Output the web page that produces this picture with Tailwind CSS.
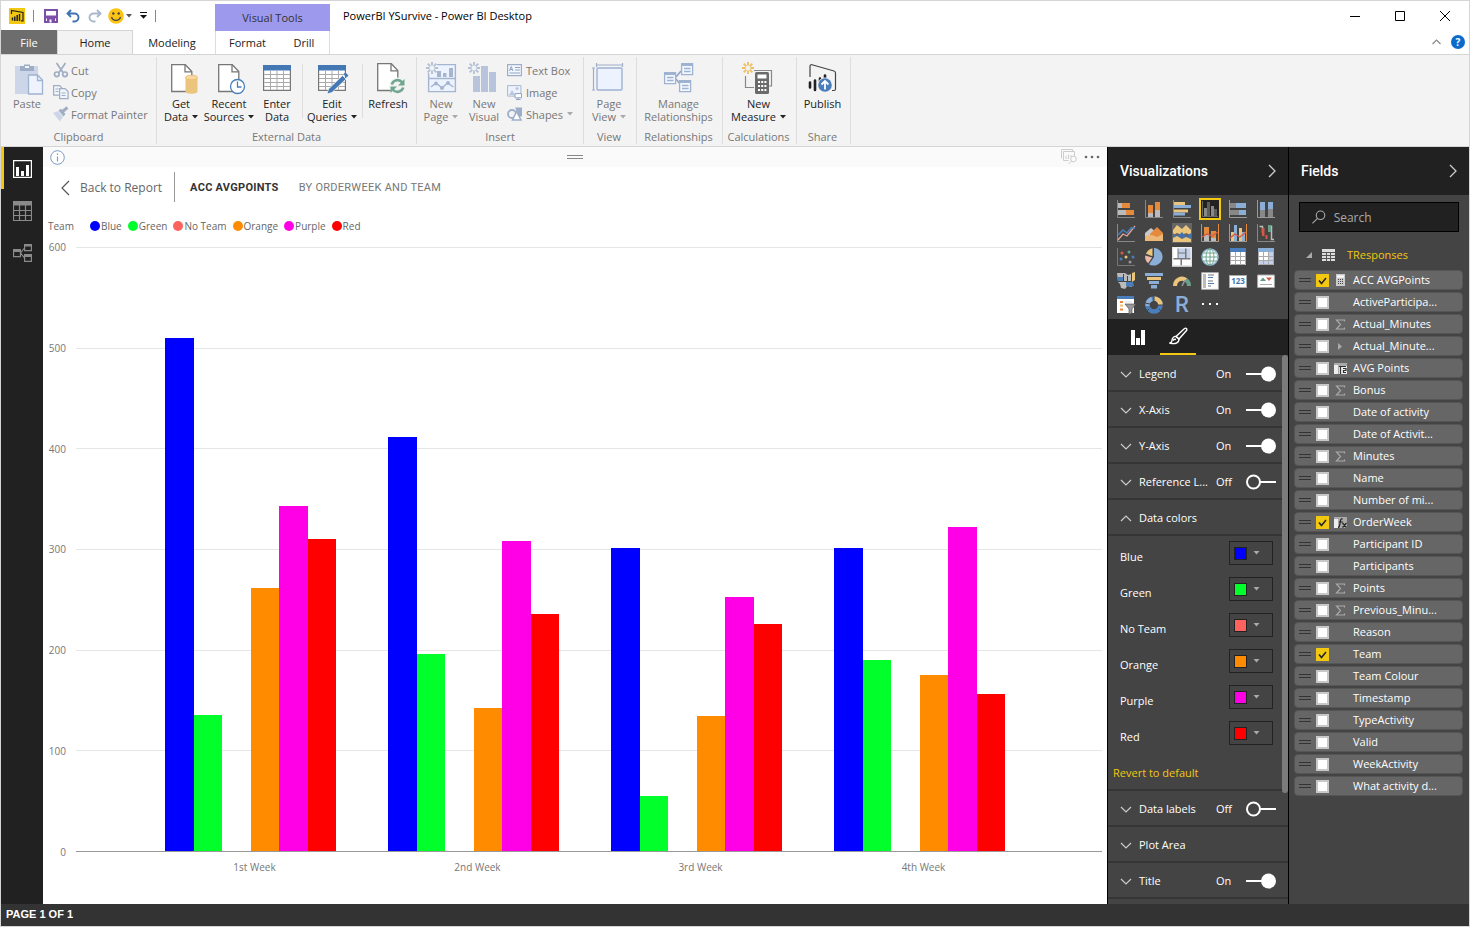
<!DOCTYPE html>
<html lang="en">
<head>
    <meta charset="UTF-8">
    <meta name="viewport" content="width=device-width, initial-scale=1.0">
    <title>PowerBI YSurvive - Power BI Desktop</title>
    <script src="https://cdn.jsdelivr.net/npm/@tailwindcss/browser@4"></script>
</head>
<body class="font-['Open_Sans','Noto_Sans',sans-serif] text-[11px] text-[#222]">

<!-- Shared icon shapes -->
<svg class="hidden">
    <symbol id="caret" viewBox="0 0 6 4"><path d="M0 0h6L3 3.6z" fill="currentColor"/></symbol>
    <symbol id="page" viewBox="0 0 34 34"><path d="M.7.7h13.6l6.5 6.8v20H.7z" fill="#fff" stroke="#777" stroke-width="1.3"/><path d="M14 1v6.8h6.6" fill="none" stroke="#777" stroke-width="1.3"/></symbol>
    <symbol id="burst" viewBox="0 0 12 12"><path d="M6 0v3.6M6 8.4V12M0 6h3.6M8.4 6H12M1.7 1.7l2.6 2.6M7.7 7.7l2.6 2.6M10.3 1.7L7.7 4.3M4.3 7.7l-2.6 2.6" stroke="currentColor" stroke-width="1.9" fill="none"/></symbol>
    <symbol id="grid" viewBox="0 0 28 26"><path d="M.6.6h26.8v24.8H.6z" fill="#fff" stroke="#777" stroke-width="1.2"/><path d="M1 9.5h26M1 13.5h26M1 17.5h26M1 21.5h26M7.5 6v19M14 6v19M20.5 6v19" stroke="#aaa"/><path d="M0 0h28v5.5H0z" fill="#4378b4"/></symbol>
    <symbol id="chev-right" viewBox="0 0 8 14"><path d="M1 1l6 6-6 6" fill="none" stroke="currentColor" stroke-width="1.3"/></symbol>
</svg>

<div class="flex h-screen flex-col overflow-hidden border border-[#d5d5d5] bg-white">

    <!-- Title bar and tabs -->
    <header class="flex h-[53px] shrink-0">
        <div class="flex w-[214px] shrink-0 flex-col">
            <div class="flex h-[30px] items-center pl-2">
                <svg width="16" height="16" viewBox="0 0 16 16"><path d="M0 0h16v16H0z" fill="#f2c811"/><path d="M2.5 6V2.5l11.500 2v8.300H12" fill="none" stroke="#222" stroke-width="1.2"/><path d="M3.500 9.500v3M5.800 8.500v4.500M8.200 7v6M10.500 6v7" stroke="#222" stroke-width="1.500"/></svg>
                <span class="ml-2 h-3 w-px bg-[#888]"></span>
                <button aria-label="Save" class="ml-2.5"><svg width="14" height="14" viewBox="0 0 14 14"><path d="M1 1h12v12H1z" fill="#fff" stroke="#7e4fa8" stroke-width="2"/><path d="M1 6.500h12v3H1z" fill="#7e4fa8"/><path d="M3 8h8v6H3z" fill="#7e4fa8"/><path d="M5.500 10.500h2v3h-2z" fill="#fff"/></svg></button>
                <button aria-label="Undo" class="ml-2"><svg width="14" height="14" viewBox="0 0 14 14"><path d="M5 1L1.500 4.500 5 8M2 4.500h6.500a4 4 0 010 8H6.500" fill="none" stroke="#3f73b5" stroke-width="1.900"/></svg></button>
                <button aria-label="Redo" class="ml-2"><svg width="14" height="14" viewBox="0 0 14 14"><path d="M9 1l3.500 3.500L9 8M12 4.500H5.500a4 4 0 000 8h2" fill="none" stroke="#a9b8cd" stroke-width="1.900"/></svg></button>
                <button aria-label="Send feedback" class="ml-1.5 flex items-center gap-0.5"><svg width="16" height="16" viewBox="0 0 16 16"><circle cx="8" cy="8" r="7.800" fill="#fcc414"/><circle cx="5.300" cy="5.500" r="1.200" fill="#444"/><circle cx="10.700" cy="5.500" r="1.200" fill="#444"/><path d="M3.500 9a4.700 4.700 0 009 0" fill="none" stroke="#444" stroke-width="1.300"/></svg><svg class="h-[4px] w-[6px] text-[#555]"><use href="#caret"/></svg></button>
                <button aria-label="Customize quick access" class="ml-2"><svg width="7" height="7" viewBox="0 0 7 7"><path d="M0 3h7L3.500 6.800z" fill="#111"/><path d="M0 .5h7" stroke="#111"/></svg></button>
                <span class="ml-2 h-3 w-px bg-[#888]"></span>
            </div>
            <nav class="flex h-[24px] shrink-0 text-center">
                <button class="w-[56px] bg-[#6d6d6d] pt-0.5 text-white">File</button>
                <button class="w-[76px] border border-b-0 border-[#d5d5d5] bg-[#f3f3f3] pt-px">Home</button>
                <button class="flex-1 pt-0.5 pr-1">Modeling</button>
            </nav>
        </div>
        <div class="flex w-[115px] shrink-0 flex-col pt-[3px]">
            <div class="flex h-[27px] items-center justify-center bg-[#9d9aee] pt-0.5 text-[#333]">Visual Tools</div>
            <nav class="flex flex-1 border-x border-[#ddd] pt-0.5">
                <button class="w-[63px]">Format</button>
                <button class="flex-1">Drill</button>
            </nav>
        </div>
        <h1 class="ml-[13px] flex-1 text-[11px] leading-[30px] text-black">PowerBI YSurvive - Power BI Desktop</h1>
        <div class="flex flex-col">
            <div class="flex h-[29px] items-center gap-[35px] pr-[18px]">
                <button aria-label="Minimize"><svg width="10" height="10"><path d="M0 5.500h10" stroke="#000"/></svg></button>
                <button aria-label="Maximize"><svg width="10" height="10"><path d="M.5.5h9v9h-9z" fill="none" stroke="#000"/></svg></button>
                <button aria-label="Close"><svg width="11" height="10"><path d="M0 0l10 10M10 0L0 10" stroke="#000"/></svg></button>
            </div>
            <div class="flex flex-1 items-center justify-end gap-2.5 pr-1">
                <button aria-label="Collapse ribbon"><svg width="9" height="6" viewBox="0 0 9 6"><path d="M.5 5l4-4 4 4" fill="none" stroke="#888" stroke-width="1.200"/></svg></button>
                <button aria-label="Help" class="flex size-[14px] items-center justify-center rounded-full bg-[#0b6bcb] text-[10px] leading-none font-bold text-white">?</button>
            </div>
        </div>
    </header>

    <!-- Ribbon -->
    <div class="flex h-[93px] shrink-0 border-y border-[#d5d5d5] bg-[#f3f3f3] py-0.5 leading-[13px]">
        <section class="flex w-[156px] flex-col border-r border-[#ddd] text-[#777]">
            <div class="flex flex-1">
                <button class="flex w-[52px] flex-col items-center pt-[5px]">
                    <svg class="mb-px" width="34" height="34" viewBox="0 0 34 34"><path d="M5 4h23v28H5z" fill="#cdd6e8"/><path d="M10 9V4h4V2.500h6V4h4v5z" fill="#9eadc6"/><path d="M15 4h4v2h-4z" fill="#f3f3f3"/><path d="M18.500 13h9l5 5v14h-14z" fill="#eef3fd" stroke="#9eb2d2" stroke-width="1.300"/><path d="M27.500 13v5.500h5" fill="none" stroke="#9eb2d2" stroke-width="1.300"/></svg>
                    <span>Paste</span>
                </button>
                <div class="flex flex-col pt-0.5">
                    <button class="flex h-[22px] items-center gap-0.5"><svg width="16" height="16" viewBox="0 0 16 16" fill="none" stroke="#a0adc2" stroke-width="1.700"><path d="M3.500 1l6.500 9.500M12.500 1L6 10.500"/><circle cx="3.800" cy="12.300" r="2.300"/><circle cx="12" cy="12.300" r="2.300"/></svg>Cut</button>
                    <button class="flex h-[22px] items-center gap-0.5"><svg width="16" height="16" viewBox="0 0 16 16" fill="#f0f4fc" stroke="#a0adc2" stroke-width="1.200"><path d="M.6 1.600h6l2 2v7.500h-8z"/><path d="M6.600 4.600h5.500l3 3v7h-8.500z"/><path d="M2.500 5h3M2.500 7.500h3M8.500 9h4M8.500 11.500h4"/></svg>Copy</button>
                    <button class="flex h-[22px] items-center gap-0.5"><svg width="16" height="16" viewBox="0 0 16 16"><path d="M0 7l5-2 5 6-3 4.500z" fill="#cdd6e8"/><path d="M5.500 4.500l2.500-1.800L12.500 8 10.500 10.500z" fill="#a0adc2"/><path d="M9.500 5.500l5-4" stroke="#a0adc2" stroke-width="3"/></svg>Format Painter</button>
                </div>
            </div>
            <span class="h-[14px] text-center">Clipboard</span>
        </section>
        <section class="flex w-[260px] flex-col border-r border-[#ddd]">
            <div class="flex flex-1 pt-[5px]">
                <button class="flex w-[48px] flex-col items-center">
                    <svg class="mb-px" width="34" height="34" viewBox="0 0 34 34"><use href="#page" x="7" y="2" width="34" height="34"/><path d="M21.500 15.500v14c0 3 12 3 12 0v-14z" fill="#ecc57c"/><ellipse cx="27.500" cy="15.500" rx="6" ry="2.300" fill="#f5d9a0" stroke="#e6b968" stroke-width=".8"/></svg>
                    <span>Get</span>
                    <span class="flex items-center gap-1">Data<svg class="h-[4px] w-[6px]"><use href="#caret"/></svg></span>
                </button>
                <button class="flex w-[48px] flex-col items-center">
                    <svg class="mb-px" width="34" height="34" viewBox="0 0 34 34"><use href="#page" x="6" y="2" width="34" height="34"/><circle cx="25.500" cy="24.500" r="7" fill="#fff" stroke="#4a7ebb" stroke-width="1.300"/><path d="M25.500 19.500v5.500h4" fill="none" stroke="#4a7ebb" stroke-width="1.300"/></svg>
                    <span>Recent</span>
                    <span class="flex items-center gap-1">Sources<svg class="h-[4px] w-[6px]"><use href="#caret"/></svg></span>
                </button>
                <button class="flex w-[48px] flex-col items-center">
                    <svg class="mb-px" width="34" height="34" viewBox="0 0 34 34"><use href="#grid" x="3" y="3" width="28" height="26"/></svg>
                    <span>Enter</span><span>Data</span>
                </button>
                <span class="mt-0.5 mb-3 ml-px w-px bg-[#ddd]"></span>
                <button class="flex w-[58px] flex-col items-center">
                    <svg class="mb-px" width="34" height="34" viewBox="0 0 34 34"><use href="#grid" x="3" y="3" width="28" height="26"/><path d="M12 32l1.500-5L27.500 13.500l3.500 3.500L17 30.500z" fill="#4378b4" stroke="#f3f3f3" stroke-width=".8"/><path d="M28.500 12l2-1.500 3 3-2 2z" fill="#4378b4"/></svg>
                    <span>Edit</span>
                    <span class="flex items-center gap-1">Queries<svg class="h-[4px] w-[6px]"><use href="#caret"/></svg></span>
                </button>
                <span class="mt-0.5 mb-3 ml-px w-px bg-[#ddd]"></span>
                <button class="flex w-[50px] flex-col items-center">
                    <svg class="mb-px" width="34" height="34" viewBox="0 0 34 34"><use href="#page" x="6" y="1" width="34" height="34"/><circle cx="26.500" cy="24" r="8.500" fill="#f3f3f3"/><path d="M20.800 22.500a6 6 0 0110.500-2M32.200 25.500a6 6 0 01-10.500 2" fill="none" stroke="#6fa68f" stroke-width="2.600"/><path d="M33.500 17v6.500H27zM19.500 31v-6.500H26z" fill="#6fa68f"/></svg>
                    <span>Refresh</span>
                </button>
            </div>
            <span class="h-[14px] text-center text-[#777]">External Data</span>
        </section>
        <section class="flex w-[167px] flex-col border-r border-[#ddd] text-[#777]">
            <div class="flex flex-1">
                <button class="flex w-[48px] flex-col items-center pt-[5px]">
                    <svg class="mb-px" width="34" height="34" viewBox="0 0 34 34"><path d="M4.600 2.600h26.800v27H4.600zM4.600 16.500h26.800" fill="#ecf3fe" stroke="#a5b5d0" stroke-width="1.400"/><path d="M13 9h4v6h-4zM19 11h3.500v4H19zM25 6h4v9h-4z" fill="#a5b5d0"/><path d="M7 25l5-4 6 5 5.500-5 6 4" fill="none" stroke="#a5b5d0" stroke-width="1.500"/><circle cx="12" cy="21.500" r="2" fill="#a5b5d0"/><circle cx="18" cy="26" r="2" fill="#a5b5d0"/><circle cx="24" cy="21" r="2" fill="#a5b5d0"/><circle cx="8" cy="6" r="6" fill="#f3f3f3"/><use href="#burst" x="2" y="0" width="12" height="12" color="#b4c0d6"/></svg>
                    <span>New</span>
                    <span class="flex items-center gap-1">Page<svg class="h-[4px] w-[6px] text-[#aaa]"><use href="#caret"/></svg></span>
                </button>
                <button class="flex w-[38px] flex-col items-center pt-[5px]">
                    <svg class="mb-px" width="34" height="34" viewBox="0 0 34 34"><path d="M6 14h7v16H6zM14 4h7v26h-7zM22 10h7v20h-7z" fill="#b7c4db"/><circle cx="7" cy="5.500" r="6" fill="#f3f3f3"/><use href="#burst" x="1" y="0" width="12" height="12" color="#b4c0d6"/></svg>
                    <span>New</span><span>Visual</span>
                </button>
                <div class="ml-1 flex flex-col pt-0.5">
                    <button class="flex h-[22px] items-center gap-1"><svg width="15" height="14" viewBox="0 0 15 14"><path d="M.6 1.600h13.800v11H.6z" fill="#f3f7fe" stroke="#9eaec9" stroke-width="1.200"/><path d="M2.500 8l1.700-4.500L6 8M3 6.500h2.400M8 4.500h5M8 7h5M2.500 10h10.500" fill="none" stroke="#8fa3c5"/></svg>Text Box</button>
                    <button class="flex h-[22px] items-center gap-1"><svg width="15" height="16" viewBox="0 0 15 16"><path d="M.6 1.600h13.300v10.500H.6z" fill="#ecf3fe" stroke="#a9b7ce"/><path d="M2 11l3-5 3 5z" fill="#b9c6dc"/><circle cx="10" cy="4.500" r="1.500" fill="#b9c6dc"/><path d="M8 9.600h6.500v4.200H8zM11.200 14v1.500M9 15.500h4.500" fill="#fff" stroke="#8fa3c5"/></svg>Image</button>
                    <button class="flex h-[22px] items-center gap-1"><svg width="15" height="14" viewBox="0 0 15 14"><circle cx="5" cy="7" r="4" fill="none" stroke="#9eaec9" stroke-width="1.800"/><path d="M8 .500h7v9H12z" fill="#9eaec9"/><path d="M9.500 4.500l4.500 8.500H5.500z" fill="#fff" stroke="#9eaec9" stroke-width="1.500"/></svg>Shapes<svg class="h-[4px] w-[6px] text-[#aaa]"><use href="#caret"/></svg></button>
                </div>
            </div>
            <span class="h-[14px] text-center">Insert</span>
        </section>
        <section class="flex w-[53px] flex-col border-r border-[#ddd] text-[#777]">
            <button class="flex flex-1 flex-col items-center pt-[5px] pr-0.5">
                <svg class="mb-px" width="34" height="34" viewBox="0 0 34 34"><rect x="5" y="6" width="25" height="22" rx="1" fill="#ecf3fe" stroke="#9eb2d2" stroke-width="1.400"/><path d="M4.500 3h26M4.500 1v4M30.500 1v4M1.500 6v22M0 6h3M0 28h3" stroke="#9eaec9" stroke-width="1.200"/></svg>
                <span>Page</span>
                <span class="flex items-center gap-1">View<svg class="h-[4px] w-[6px] text-[#aaa]"><use href="#caret"/></svg></span>
            </button>
            <span class="h-[14px] pr-0.5 text-center">View</span>
        </section>
        <section class="flex w-[86px] flex-col border-r border-[#ddd] text-[#777]">
            <button class="flex flex-1 flex-col items-center pt-[5px] pr-0.5">
                <svg class="mb-px" width="34" height="34" viewBox="0 0 34 34"><path d="M14 15l5-6M14 17l5 6" stroke="#8fa3c5" stroke-width="1.600"/><g fill="#f3f7fe" stroke="#9eb2d2" stroke-width="1.300"><path d="M2.600 10.600h11v11h-11zM19.600 1.600h11v11h-11zM17.600 18.600h11v11h-11z"/><path d="M5 15.500h6.500M5 18.500h6.500M22 6.500h6.500M22 9.500h6.500M20 23.500h6.500M20 26.500h6.500"/></g><path d="M2 10h12v3H2zM19 1h12v3H19zM17 18h12v3H17z" fill="#9eb2d2"/></svg>
                <span>Manage</span><span>Relationships</span>
            </button>
            <span class="h-[14px] pr-0.5 text-center">Relationships</span>
        </section>
        <section class="flex w-[74px] flex-col border-r border-[#ddd]">
            <button class="flex flex-1 flex-col items-center pt-[5px] pr-0.5">
                <svg class="mb-px" width="34" height="34" viewBox="0 0 34 34"><path d="M12 8.500h17.500V24H27M3.500 14v11.500H12" fill="none" stroke="#888" stroke-width="1.200"/><rect x="13" y="10" width="14" height="22" rx="1.500" fill="#6b6b6b"/><path d="M15.500 12.500h9v4h-9z" fill="#fff"/><path d="M16 19h2v2h-2zM19.200 19h2v2h-2zM22.400 19h2v2h-2zM16 23h2v2h-2zM19.200 23h2v2h-2zM22.400 23h2v2h-2zM16 27h2v2h-2zM19.200 27h2v2h-2zM22.400 27h2v2h-2z" fill="#fff"/><use href="#burst" x="0" y="0" width="12" height="12" color="#eebf63"/></svg>
                <span>New</span>
                <span class="flex items-center gap-1">Measure<svg class="h-[4px] w-[6px]"><use href="#caret"/></svg></span>
            </button>
            <span class="h-[14px] pr-0.5 text-center text-[#777]">Calculations</span>
        </section>
        <section class="flex w-[54px] flex-col border-r border-[#ddd]">
            <button class="flex flex-1 flex-col items-center pt-[5px] pr-0.5">
                <svg class="mb-px" width="34" height="34" viewBox="0 0 34 34"><path d="M4 15V4c0-1 1-1.500 2-1.200L28 9c1.200.3 1.500 1 1.500 2v16c0 1-.5 1.500-1.500 1.500h-2" fill="none" stroke="#444" stroke-width="1.200"/><path d="M4 20.500v5M9 18.500V28M14 16.500v3M19 13.500v3" stroke="#222" stroke-width="2.600" stroke-linecap="round"/><circle cx="19" cy="23" r="7.500" fill="#f3f3f3"/><circle cx="19" cy="23" r="6.800" fill="#4a7ebb"/><path d="M19 27.500v-8M15.500 22.500l3.500-3.500 3.500 3.500" fill="none" stroke="#fff" stroke-width="1.800"/></svg>
                <span>Publish</span>
            </button>
            <span class="h-[14px] pr-0.5 text-center text-[#777]">Share</span>
        </section>
    </div>

    <div class="flex min-h-0 flex-1">
        <!-- View switcher -->
        <nav class="flex w-[42px] shrink-0 flex-col bg-[#212121]">
            <button aria-label="Report view" class="flex h-[42px] items-center border-l-3 border-[#f2c811] pt-0.5 pl-[9px]"><svg width="19" height="18" viewBox="0 0 19 18"><path d="M.6.6h17.800v16.800H.6z" fill="none" stroke="#fff" stroke-width="1.200"/><path d="M3 7h3v9H3zM8 11h3v5H8zM13 5h3v11h-3z" fill="#fff"/></svg></button>
            <button aria-label="Data view" class="flex h-[42px] items-center pt-0.5 pl-3"><svg width="19" height="20" viewBox="0 0 19 20"><path d="M.5.500h18v19H.5zM0 9.500h19M0 14.500h19M6.500 4v16M12.500 4v16" fill="none" stroke="#8a8a8a" stroke-width="1.200"/><path d="M0 0h19v4.500H0z" fill="#8a8a8a"/></svg></button>
            <button aria-label="Relationship view" class="flex h-[42px] items-center pt-0.5 pl-3"><svg width="19" height="18" viewBox="0 0 19 18"><path d="M.6 5.600h6.800v7H.6zM11.600.6h6.800v6h-6.800zM11.600 10.600h6.800v6.800h-6.800zM7.500 9l4-5M7.500 9l4 5" fill="none" stroke="#8a8a8a" stroke-width="1.200"/><path d="M0 5h8v3H0zM11 0h8v2.500h-8zM11 10h8v3h-8z" fill="#8a8a8a"/></svg></button>
        </nav>

        <!-- Report canvas -->
        <main class="flex min-w-0 flex-1 flex-col bg-white">
            <div class="grid h-[20px] shrink-0 grid-cols-[1fr_auto_1fr] items-center bg-[#fafafa] px-[7px]">
                <button aria-label="Information" class="justify-self-start"><svg width="15" height="15" viewBox="0 0 15 15"><circle cx="7.500" cy="7.500" r="6.800" fill="#fff" stroke="#7c9cc4"/><path d="M7.500 6.500v5M7.500 3.500v1.500" stroke="#7c9cc4" stroke-width="1.200"/></svg></button>
                <svg width="16" height="6" viewBox="0 0 16 6"><path d="M0 1.500h16M0 4.500h16" stroke="#888"/></svg>
                <div class="flex items-center gap-1.5 justify-self-end">
                    <svg width="17" height="16" viewBox="0 0 17 16" fill="none" stroke="#ccc"><path d="M.5 9.500v-9h11v2M2.500 11.500v-9h11v5M2.500 11.500h5M5 10V7M7.500 10V5.500M10 8V6"/><circle cx="12.500" cy="10" r="2.800"/><path d="M10.500 12l-3 3"/></svg>
                    <button aria-label="More options"><svg width="16" height="4" viewBox="0 0 16 4" fill="#666"><circle cx="2" cy="2" r="1.300"/><circle cx="8" cy="2" r="1.300"/><circle cx="14" cy="2" r="1.300"/></svg></button>
                </div>
            </div>
            <div class="flex h-[40px] shrink-0 items-center pl-[18px] text-[#666]">
                <button class="flex items-center gap-2.5 pt-px text-[12px]"><svg width="9" height="16" viewBox="0 0 9 16"><path d="M8 1L1 8l7 7" fill="none" stroke="#555" stroke-width="1.200"/></svg>Back to Report</button>
                <span class="ml-3 h-[30px] w-px bg-[#999]"></span>
                <h2 class="ml-[15px] pt-0.5 font-[Roboto] text-[11px] font-bold tracking-wide text-[#333]">ACC AVGPOINTS</h2>
                <span class="ml-5 pt-0.5 font-[Roboto] text-[11px] tracking-wide text-[#777]">BY ORDERWEEK AND TEAM</span>
            </div>
            <div id="legend" class="mt-[11px] flex h-[16px] shrink-0 items-center gap-1.5 pl-[5px] text-[10px] text-[#666]">
                <span class="mr-2.5">Team</span>
            </div>
            <div class="mt-[13px] flex min-h-0 flex-1 pr-[5px] pl-[5px] text-[10px] text-[#777]">
                <div class="flex w-[18px] flex-col justify-between pb-[52px] text-right leading-none">
                    <span class="-mt-[5px]">600</span><span>500</span><span>400</span><span>300</span><span>200</span><span>100</span><span class="-mb-[5px]">0</span>
                </div>
                <div class="ml-2.5 flex min-w-0 flex-1 flex-col">
                    <div class="relative min-h-0 flex-1 border-b border-[#999]">
                        <div class="absolute inset-0 grid grid-rows-6">
                            <div class="border-t border-[#e6e6e6]"></div><div class="border-t border-[#e6e6e6]"></div><div class="border-t border-[#e6e6e6]"></div><div class="border-t border-[#e6e6e6]"></div><div class="border-t border-[#e6e6e6]"></div><div class="border-t border-[#e6e6e6]"></div>
                        </div>
                        <div id="bars" class="absolute inset-0 grid grid-cols-4 px-[67px]"></div>
                    </div>
                    <div class="grid h-[52px] grid-cols-4 px-[67px] pt-[7px] text-center leading-[16px]">
                        <span>1st Week</span><span>2nd Week</span><span>3rd Week</span><span>4th Week</span>
                    </div>
                </div>
            </div>
        </main>

        <!-- Visualizations pane -->
        <aside class="flex w-[182px] shrink-0 flex-col border-x border-black bg-[#444] text-white">
            <div class="flex h-[48px] shrink-0 items-center justify-between bg-[#212121] pr-3 pl-3">
                <h2 class="font-[Roboto] text-[14px] font-medium">Visualizations</h2>
                <button aria-label="Collapse visualizations"><svg class="h-[14px] w-[8px] text-[#ccc]"><use href="#chev-right"/></svg></button>
            </div>
            <div class="grid shrink-0 auto-rows-[24px] grid-cols-[repeat(6,28px)] place-items-center px-1 py-0.5">
                <button aria-label="Stacked bar"><svg width="20" height="20" viewBox="0 0 20 20"><path d="M1.500 1v17.500H19" fill="none" stroke="#888"/><path d="M2 4h5v5H2zM2 11h9v5H2z" fill="#bbb"/><path d="M6 4h8v5H6zM10 11h8v5h-8z" fill="#e58a3c"/></svg></button>
                <button aria-label="Stacked column"><svg width="20" height="20" viewBox="0 0 20 20"><path d="M1.500 1v17.500H19" fill="none" stroke="#888"/><path d="M4 14h5v4H4zM11 11h5v7h-5z" fill="#bbb"/><path d="M4 6h5v8H4zM11 3h5v8h-5z" fill="#e58a3c"/></svg></button>
                <button aria-label="Clustered bar"><svg width="20" height="20" viewBox="0 0 20 20"><path d="M1.500 1v17.500H19" fill="none" stroke="#888"/><path d="M2 3h11v3H2zM2 10.500h14v3H2z" fill="#ecc57c"/><path d="M2 6h17v3H2zM2 13.500h11v3H2z" fill="#8aaed6"/></svg></button>
                <button aria-label="Clustered column" class="border-2 border-[#f2c811] bg-[#222]"><svg width="18" height="18" viewBox="0 0 18 18"><path d="M1.500 1v15.500H17" fill="none" stroke="#666"/><path d="M3 8h3v8H3zM10 6h3v10h-3z" fill="#888"/><path d="M6 2h3v14H6zM13 9h3v7h-3z" fill="#5c5c5c"/></svg></button>
                <button aria-label="100% stacked bar"><svg width="20" height="20" viewBox="0 0 20 20"><path d="M1.500 1v17.500H19" fill="none" stroke="#999"/><path d="M2 4h7v5H2zM2 11h10v5H2z" fill="#888"/><path d="M8 4h10v5H8zM11 11h7v5h-7z" fill="#8aaed6"/></svg></button>
                <button aria-label="100% stacked column"><svg width="20" height="20" viewBox="0 0 20 20"><path d="M1.500 1v17.500H19" fill="none" stroke="#999"/><path d="M4 11h5v7H4zM12 8h5v10h-5z" fill="#888"/><path d="M4 3h5v8H4zM12 3h5v7h-5z" fill="#8aaed6"/></svg></button>

                <button aria-label="Line"><svg width="20" height="20" viewBox="0 0 20 20" fill="none"><path d="M1.500 1v17.500H19" stroke="#888"/><path d="M2 17l5-6 4 2 8-10" stroke="#e0a598" stroke-width="1.300"/><path d="M2 12l5-5 4 3 4-5h4" stroke="#4a7ebb" stroke-width="1.500"/></svg></button>
                <button aria-label="Area"><svg width="20" height="20" viewBox="0 0 20 20"><path d="M1 10l6-5 5 4v9H1z" fill="#c9c9c9"/><path d="M6 11l7-7 6 6v8H6z" fill="#e58a3c"/><path d="M1 13l7-1 5 2 6-3v7H1z" fill="#ecb878"/></svg></button>
                <button aria-label="Stacked area"><svg width="20" height="20" viewBox="0 0 20 20"><path d="M0 0h20v20H0z" fill="#666"/><path d="M1 7l4-5 5 4 4-4 5 5v5l-5-2-4 2-5-2-4 2z" fill="#ecc57c"/><path d="M1 10l4 4 5-5 4 5 5-4v5l-5 1-4-2-5 2-4-1z" fill="#3f73b5"/><path d="M1 15l4-2 5 3 4-2 5 2v3H1z" fill="#ecc57c"/></svg></button>
                <button aria-label="Line and stacked column"><svg width="20" height="20" viewBox="0 0 20 20"><path d="M1.500 1v17.500H19" fill="none" stroke="#999"/><path d="M18.500 1v17" stroke="#e58a3c"/><path d="M4 11h5v7H4zM11 14h5v4h-5z" fill="#bbb"/><path d="M4 4h5v8H4zM11 8h5v7h-5z" fill="#e58a3c"/><path d="M2 14l5-3 5 2 6-4" fill="none" stroke="#d35b45" stroke-width="1.400"/></svg></button>
                <button aria-label="Line and clustered column"><svg width="20" height="20" viewBox="0 0 20 20"><path d="M1.500 1v17.500H19" fill="none" stroke="#999"/><path d="M18.500 1v17" stroke="#e58a3c"/><path d="M3 9h3v9H3zM11 5h3v13h-3z" fill="#ecc57c"/><path d="M6 2h3v16H6zM14 9h3v9h-3z" fill="#8aaed6"/><path d="M2 15l5-4 5 3 6-5" fill="none" stroke="#d35b45" stroke-width="1.400"/></svg></button>
                <button aria-label="Waterfall"><svg width="20" height="20" viewBox="0 0 20 20"><path d="M1.500 1v17.500H19" fill="none" stroke="#888"/><path d="M3.500 3.500h3V10M15.500 2.500v14H18" fill="none" stroke="#bbb" stroke-width="1.500"/><path d="M6 5h2.500v8H6zM9.500 12h2v4h-2z" fill="#d35b45"/><path d="M12 2h3v7h-3z" fill="#69a08a"/></svg></button>

                <button aria-label="Scatter"><svg width="20" height="20" viewBox="0 0 20 20"><path d="M1.500 1v17.500H19" fill="none" stroke="#777"/><circle cx="6" cy="6" r="1.600" fill="#d35b45"/><circle cx="13" cy="5" r="1.500" fill="#69a08a"/><circle cx="5" cy="12" r="1.500" fill="#4a7ebb"/><circle cx="10" cy="10" r="1.500" fill="#ecc57c"/><circle cx="17" cy="10" r="1.500" fill="#4a7ebb"/><circle cx="14" cy="15" r="1.500" fill="#999"/></svg></button>
                <button aria-label="Pie"><svg width="20" height="20" viewBox="0 0 20 20"><path d="M10 1a8.800 8.800 0 11-5 16.200L10 10z" fill="#8aaed6"/><path d="M8.500 1.200v8L2 6.800a9 9 0 016.500-5.600z" fill="#ecc57c"/><path d="M1.200 8.500l7 2-4 5.800a9 9 0 01-3-7.800z" fill="#e9b9a9"/></svg></button>
                <button aria-label="Treemap"><svg width="20" height="20" viewBox="0 0 20 20"><path d="M1 1h18v18H1z" fill="#777"/><path d="M1 1h4.500v10H1zM1 12.500h7.500V18.500H1zM10 12.500h9v6h-9z" fill="#fff"/><path d="M6.500 1H13v4.500H6.500zM14.500 1H19v10h-4.500zM6.500 6.500H13V11H6.500z" fill="#c3d2ea"/><path d="M.8.800h18.400v18.200H.8z" fill="none" stroke="#eee" stroke-width="1.500"/></svg></button>
                <button aria-label="Map"><svg width="20" height="20" viewBox="0 0 20 20" fill="none" stroke="#6fa68f"><circle cx="10" cy="10" r="8" fill="#fff" stroke="#8ebbd6" stroke-width="1.500"/><ellipse cx="10" cy="10" rx="4" ry="8"/><path d="M10 2v16M2 10h16M3.500 6h13M3.500 14h13"/></svg></button>
                <button aria-label="Table"><svg width="20" height="20" viewBox="0 0 20 20"><path d="M2 2h16v16H2z" fill="#fff"/><path d="M2 9.500h16M2 13.500h16M7.500 5v13M12.500 5v13M2.500 5v12.500h15V5" fill="none" stroke="#aaa"/><path d="M2 1h16v4H2z" fill="#4a7ebb"/></svg></button>
                <button aria-label="Matrix"><svg width="20" height="20" viewBox="0 0 20 20"><path d="M2 2h16v16H2z" fill="#fff"/><path d="M12 5h6v13h-6zM2 14h16v4H2z" fill="#c3d2ea"/><path d="M2 9.500h16M2 13.500h16M7.500 5v13M12.500 5v13M2.500 5v12.500h15V5" fill="none" stroke="#aaa"/><path d="M2 1h16v4H2z" fill="#8aaed6"/></svg></button>

                <button aria-label="Filled map"><svg width="20" height="20" viewBox="0 0 20 20"><path d="M1 2h8l3 2 3-1v9l1 4h-2l-2-2-3 4-4-1-1-4-2-2z" fill="#bbb"/><path d="M1 6h6v4H2zM10 11h7l1 4-4 1-4-1z" fill="#4a7ebb"/><path d="M16 2l3-1v8l-3 2z" fill="#ecc57c"/><path d="M7.500 3v7.500H15M2 10.500h6M11.500 5v6" stroke="#444" fill="none"/></svg></button>
                <button aria-label="Funnel"><svg width="20" height="20" viewBox="0 0 20 20"><path d="M1 2h18v3H1zM5 10h10v3H5z" fill="#8aaed6"/><path d="M3 6h14v3H3z" fill="#ecc57c"/><path d="M7 14h6v3.500H7z" fill="#8aaed6"/></svg></button>
                <button aria-label="Gauge"><svg width="20" height="20" viewBox="0 0 20 20" fill="none"><path d="M3 15a7 7 0 0111-6" stroke="#ecc57c" stroke-width="4"/><path d="M14 9a7 7 0 013 6" stroke="#69a08a" stroke-width="4"/><path d="M10 15l3-6" stroke="#999" stroke-width="1.500"/></svg></button>
                <button aria-label="Multi-row card"><svg width="20" height="20" viewBox="0 0 20 20"><path d="M1.600 1.600h16.800v16.800H1.600z" fill="#fff" stroke="#aaa"/><path d="M3 3h3v14H3z" fill="#bbb"/><path d="M8 4h6M8 10h5M8 15h3" stroke="#777" stroke-width="1.200"/><path d="M8 6.500h5M8 12.500h6" stroke="#4a7ebb" stroke-width="1.200"/></svg></button>
                <button aria-label="Card" class="h-[13px] w-[18px] border border-[#aaa] bg-white text-[8px] leading-[10px] font-bold text-[#4378b4]">123</button>
                <button aria-label="KPI"><svg width="20" height="20" viewBox="0 0 20 20"><path d="M1.600 4h16.800v12.500H1.600z" fill="#fff" stroke="#aaa"/><path d="M4 10l3-3.500 3 3.500z" fill="#5d9c82"/><path d="M10 6.500h6L13 10z" fill="#d35b45"/><path d="M4 13.500h12" stroke="#aaa"/></svg></button>

                <button aria-label="Slicer"><svg width="20" height="20" viewBox="0 0 20 20"><path d="M1 1h17v17H1z" fill="#fff"/><path d="M1 1h17v3H1z" fill="#4a7ebb"/><path d="M4 6h3v2H4zM4 13.500h3v2H4z" fill="#e58a3c"/><path d="M4 9.500h3v2.200H4z" fill="#ecc57c"/><path d="M9 7h7" stroke="#ddd"/><path d="M9 9h11l-4 5v4l-3 1.500V14z" fill="#999" stroke="#444" stroke-width=".6"/></svg></button>
                <button aria-label="Donut"><svg width="20" height="20" viewBox="0 0 20 20"><circle cx="10" cy="10" r="6.500" fill="none" stroke="#4a7ebb" stroke-width="4.500"/><path d="M10 3.500a6.500 6.500 0 016.500 6.500" fill="none" stroke="#ecc57c" stroke-width="4.500"/><path d="M3.600 11A6.500 6.500 0 018 3.800" fill="none" stroke="#8aaed6" stroke-width="4.500"/><path d="M10 1v5M14 10h5M5 14l-3 3M15 14l3 3M1 8l5 1" stroke="#444"/></svg></button>
                <button aria-label="R script" class="font-[Roboto] text-[22px] leading-none font-medium text-[#8aaed6]">R</button>
                <button aria-label="Import visual"><svg width="20" height="20" viewBox="0 0 20 20" fill="#fff"><path d="M2 8h2v2H2zM9 8h2v2H9zM16 8h2v2h-2z"/></svg></button>
            </div>
            <div class="flex h-[36px] shrink-0 bg-[#212121] pl-3">
                <button aria-label="Fields" class="flex w-[36px] items-center justify-center"><svg width="16" height="16" viewBox="0 0 16 16"><path d="M1 1h4v15H1zM6 9h4v7H6zM11 1h4v15h-4z" fill="#fff"/></svg></button>
                <button aria-label="Format" class="ml-1 flex w-[36px] items-center justify-center border-b-2 border-[#f2c811]"><svg width="19" height="18" viewBox="0 0 19 18" fill="none" stroke="#fff" stroke-width="1.400"><path d="M7 9.500L15.500 1.500c1.500-1 3 .500 2 2L10 12z"/><path d="M7 9.500l3 2.500c0 4-4 5.500-9 4 2.500-1 1.500-2 2.500-4.500.8-1.800 2.500-2.300 3.500-2z"/><path d="M4 13.500c1-1.500 2-1.500 3-1"/></svg></button>
            </div>
            <div class="relative min-h-0 flex-1 overflow-hidden">
                <div id="format-top" class="pt-px"></div>
                <div id="swatches"></div>
                <div class="flex h-[37px] items-center pt-1.5 pl-[5px]"><a href="#" class="text-[#f2c811]">Revert to default</a></div>
                <div id="format-bottom"></div>
                <div class="absolute top-0 right-0 h-[438px] w-[6px] rounded-full bg-[#7b7b7b]"></div>
            </div>
        </aside>

        <!-- Fields pane -->
        <aside class="flex w-[180px] shrink-0 flex-col bg-[#444] text-white">
            <div class="flex h-[48px] shrink-0 items-center justify-between bg-[#212121] px-3">
                <h2 class="font-[Roboto] text-[14px] font-medium">Fields</h2>
                <button aria-label="Collapse fields"><svg class="h-[14px] w-[8px] text-[#ccc]"><use href="#chev-right"/></svg></button>
            </div>
            <label class="mx-2.5 mt-[7px] flex h-[30px] shrink-0 items-center gap-2 border border-black bg-[#212121] pl-3">
                <svg width="16" height="16" viewBox="0 0 16 16" fill="none" stroke="#aaa" stroke-width="1.300"><circle cx="10" cy="6" r="5"/><path d="M6.500 9.500L.500 15.500"/></svg>
                <input type="text" placeholder="Search" aria-label="Search" class="w-full min-w-0 pt-px text-[12px] placeholder:text-[#aaa]">
            </label>
            <div class="mt-3 flex h-[22px] shrink-0 items-center pl-4 text-[#f2c811]">
                <svg width="8" height="8" viewBox="0 0 8 8"><path d="M7 1v6H1z" fill="#aaa"/></svg>
                <svg class="mr-3 ml-[9px]" width="13" height="12" viewBox="0 0 13 12"><path d="M0 0h13v12H0z" fill="#ddd"/><path d="M0 3.500h13M0 6.500h13M0 9.500h13M4.500 3v9M8.500 3v9" stroke="#555"/></svg>
                TResponses
            </div>
            <ul id="fields" class="mt-1 flex flex-col gap-0.5 pr-1.5 pl-[5px]"></ul>
        </aside>
    </div>

    <footer class="flex h-[22px] shrink-0 items-center bg-[#333] pb-px pl-[5px] font-['Liberation_Sans'] text-[11px] font-bold text-white">PAGE 1 OF 1</footer>
</div>

<script>
    const teams = [
        ['Blue', '#0000ff'],
        ['Green', '#00ff2b'],
        ['No Team', '#fd625e'],
        ['Orange', '#ff8c00'],
        ['Purple', '#ff00e6'],
        ['Red', '#ff0000']
    ];

    // Average points per week, in the order of the teams
    const weeks = [
        [510, 135, 0, 261, 343, 310],
        [411, 196, 0, 142, 308, 235],
        [301, 55, 0, 134, 252, 226],
        [301, 190, 0, 175, 322, 156]
    ];

    // name, checked, icon
    const fields = [
        ['ACC AVGPoints', true, 'calc'], ['ActiveParticipa...', false, ''], ['Actual_Minutes', false, 'sum'],
        ['Actual_Minute...', false, 'arrow'], ['AVG Points', false, 'column'], ['Bonus', false, 'sum'],
        ['Date of activity', false, ''], ['Date of Activit...', false, ''], ['Minutes', false, 'sum'],
        ['Name', false, ''], ['Number of mi...', false, ''], ['OrderWeek', true, 'fx'],
        ['Participant ID', false, ''], ['Participants', false, ''], ['Points', false, 'sum'],
        ['Previous_Minu...', false, 'sum'], ['Reason', false, ''], ['Team', true, ''],
        ['Team Colour', false, ''], ['Timestamp', false, ''], ['TypeActivity', false, ''],
        ['Valid', false, ''], ['WeekActivity', false, ''], ['What activity d...', false, '']
    ];

    const fieldIcons = {
        '': '',
        sum: '<path d="M10.500 3.500V2h-8l4 4.500-4 4.500h8V9.500" fill="none" stroke="#aaa" stroke-width="1.200"/>',
        arrow: '<path d="M4 3l4 3.500L4 10z" fill="#aaa"/>',
        calc: '<path d="M2 0h9v12H2z" fill="#ccc"/><path d="M3 1.500h7v2H3z" fill="#fff"/><path d="M4 5.500h5M4 7.500h5M4 9.500h5" stroke="#444" stroke-dasharray="1 1"/>',
        column: '<path d="M0 1h13v11H0z" fill="#aaa"/><path d="M0 3h4v9H0zM5 4h8v8H5z" fill="#eee"/><path d="M5 4.500h7M6.500 4v8M9 6.500h3v2H9.500v2H12" fill="none" stroke="#333" stroke-width="1.200"/>',
        fx: '<path d="M0 1h13v11H0z" fill="#aaa"/><path d="M0 3h4v9H0z" fill="#eee"/><path d="M4 11.500c1.500 0 1.500-1 2-4l.5-3c.3-1.500 1-2 2.200-1.500M5 6h4M8.500 7l4 4.500M12.500 7l-4 4.500" fill="none" stroke="#222" stroke-width="1.200"/>'
    };

    function formatRow(label, state, open) {
        const chevron = open ? 'M1 6l5-5 5 5' : 'M1 1l5 5 5-5';
        const knob = state === 'On'
            ? '<path d="M0 8h18" stroke="#fff" stroke-width="2"/><circle cx="22.500" cy="8" r="7.500" fill="#fff"/>'
            : '<path d="M14 8h16" stroke="#fff" stroke-width="2"/><circle cx="7.500" cy="8" r="6.500" fill="none" stroke="#fff" stroke-width="2"/>';
        const toggle = state ? `
            <label class="flex items-center">
                <span class="w-[30px]">${state}</span>
                <span class="grid">
                    <input type="checkbox" aria-label="${label}" ${state === 'On' ? 'checked' : ''} class="col-start-1 row-start-1 h-4 w-[30px] appearance-none">
                    <svg width="30" height="16" class="pointer-events-none col-start-1 row-start-1">${knob}</svg>
                </span>
            </label>` : '';
        return `
            <div class="flex h-[36px] items-center border-b-2 border-[#353535] px-3 pt-0.5">
                <button class="flex w-[96px] items-center gap-[7px] whitespace-nowrap">
                    <svg width="12" height="7" viewBox="0 0 12 7"><path d="${chevron}" fill="none" stroke="#ccc" stroke-width="1.200"/></svg>${label}
                </button>${toggle}
            </div>`;
    }

    document.getElementById('format-top').innerHTML =
        formatRow('Legend', 'On') + formatRow('X-Axis', 'On') + formatRow('Y-Axis', 'On') +
        formatRow('Reference L...', 'Off') + formatRow('Data colors', '', true);
    document.getElementById('format-bottom').innerHTML =
        '<div class="border-t-2 border-[#353535]"></div>' +
        formatRow('Data labels', 'Off') + formatRow('Plot Area', '') + formatRow('Title', 'On');

    document.getElementById('swatches').innerHTML = teams.map(([name, color]) => `
        <div class="flex h-[36px] items-center justify-between pr-[15px] pb-0.5 pl-3">
            <span class="pt-2">${name}</span>
            <button aria-label="${name} color" class="flex h-[24px] w-[44px] items-center gap-1.5 border border-[#222] pl-1">
                <span class="size-[13px] border border-[#222]" style="background:${color}"></span>
                <svg class="h-[4px] w-[7px] text-[#aaa]"><use href="#caret"/></svg>
            </button>
        </div>`).join('');

    document.getElementById('legend').innerHTML += teams.map(([name, color]) => `
        <span class="flex items-center gap-px"><span class="size-[10px] rounded-full" style="background:${color}"></span>${name}</span>`).join('');

    document.getElementById('bars').innerHTML = weeks.map(values => `
        <div class="flex items-end pr-[30px] pl-[22px]">${values.map((v, i) => `
            <div class="flex-1" style="height:${v / 6}%;background:${teams[i][1]}"></div>`).join('')}
        </div>`).join('');

    document.getElementById('fields').innerHTML = fields.map(([name, checked, icon]) => `
        <li class="rounded-sm border border-[#555] bg-[#666]">
            <label class="flex h-[18px] items-center pl-1 whitespace-nowrap">
                <svg width="12" height="5"><path d="M0 .5h12M0 3.500h12" stroke="#333"/></svg>
                <span class="ml-[5px] grid">
                    <input type="checkbox" ${checked ? 'checked' : ''} class="col-start-1 row-start-1 size-[13px] appearance-none border-2 border-[#c8c8c8] bg-white checked:border-[#f2c811] checked:bg-[#f2c811]">
                    <svg width="13" height="13" class="pointer-events-none col-start-1 row-start-1">${checked ? '<path d="M3 6.500l2.500 3L10 4" fill="none" stroke="#222" stroke-width="1.500"/>' : ''}</svg>
                </span>
                <svg width="13" height="13" class="mr-1.5 ml-[5px]">${fieldIcons[icon]}</svg>
                <span class="pt-px">${name}</span>
            </label>
        </li>`).join('');
</script>
</body>
</html>
